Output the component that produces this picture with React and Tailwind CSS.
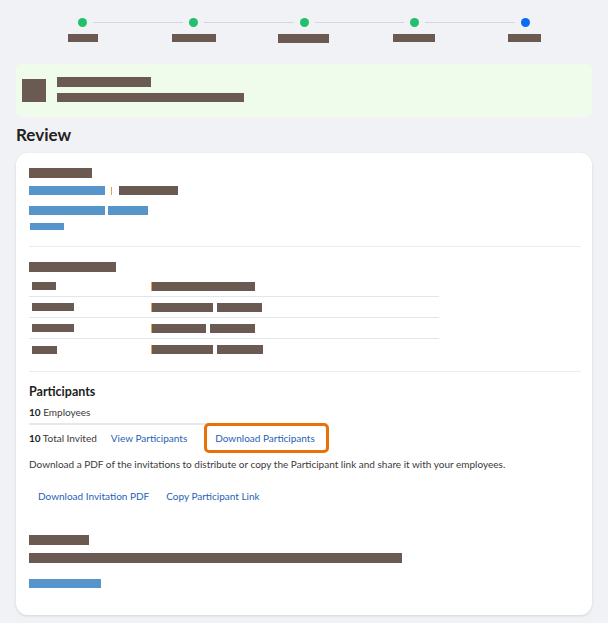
import React from 'react';

const brown = 'bg-[#6b5a52]';
const blue = 'bg-[#5595c9]';

const Block = ({ className = '' }) => <span className={`block ${className}`} />;

const steps = [
  { w: 'w-[30px]', h: 'h-[8px]', done: true },
  { w: 'w-[44px]', h: 'h-[8px]', done: true },
  { w: 'w-[51px]', h: 'h-[9px]', done: true },
  { w: 'w-[42px]', h: 'h-[8px]', done: true },
  { w: 'w-[33px]', h: 'h-[8px]', done: false },
];

const rows = [
  { a: 'w-[24px]', b: ['w-[104px]'] },
  { a: 'w-[42px]', b: ['w-[62px]', 'w-[45px]'] },
  { a: 'w-[42px]', b: ['w-[55px]', 'w-[45px]'] },
  { a: 'w-[25px]', b: ['w-[62px]', 'w-[46px]'] },
];

const Stepper = () => (
  <div className="pt-[18px]">
    <div className="flex items-center px-[78px]">
      {steps.map((s, i) => (
        <React.Fragment key={i}>
          <span
            className={`block w-[9px] h-[9px] rounded-full shrink-0 ${s.done ? 'bg-[#22c06b]' : 'bg-[#0a6cf5]'}`}
          />
          {i < steps.length - 1 && <span className="block flex-1 h-px bg-[#d4d6db] mx-[6px]" />}
        </React.Fragment>
      ))}
    </div>
    <div className="grid grid-cols-5 mx-[28px] mt-[7px] h-[9px]">
      {steps.map((s, i) => (
        <div key={i} className="flex justify-center">
          <Block className={`${brown} ${s.w} ${s.h}`} />
        </div>
      ))}
    </div>
  </div>
);

export default function App() {
  return (
    <div
      className="w-[608px] min-h-[623px] bg-[#f1f2f6] text-[#3a3a3a] pb-[9px]"
      style={{ fontFamily: 'Lato, "Open Sans", Arial, sans-serif' }}
    >
      <Stepper />

      {/* banner */}
      <div className="mx-[16px] mt-[21px] h-[53px] rounded-[6px] bg-[#effcec] flex items-center pl-[6px]">
        <Block className={`${brown} w-[24px] h-[23px]`} />
        <div className="ml-[11px] flex flex-col gap-[6px] -mt-[2px]">
          <Block className={`${brown} w-[94px] h-[10px]`} />
          <Block className={`${brown} w-[187px] h-[9px]`} />
        </div>
      </div>

      <h1 className="mx-[16px] mt-[6px] text-[17px] leading-[24px] font-bold text-[#222]">Review</h1>

      {/* card */}
      <div className="mx-[16px] mt-[6px] bg-white rounded-[12px] shadow-[0_1px_3px_rgba(0,0,0,0.12)] pl-[13px] pr-[11px] pt-[15px] pb-[27px]">
        <Block className={`${brown} w-[63px] h-[10px]`} />
        <div className="flex items-center mt-[8px]">
          <Block className={`${blue} w-[76px] h-[9px]`} />
          <span className="block w-px h-[8px] bg-[#e3a34a] ml-[6px]" />
          <Block className={`${brown} w-[59px] h-[9px] ml-[7px]`} />
        </div>
        <div className="flex items-center gap-[3px] mt-[11px]">
          <Block className={`${blue} w-[76px] h-[9px]`} />
          <Block className={`${blue} w-[40px] h-[9px]`} />
        </div>
        <Block className={`${blue} w-[34px] h-[7px] mt-[8px] ml-px`} />

        <div className="h-px bg-[#ececef] mt-[16px]" />

        <Block className={`${brown} w-[87px] h-[10px] mt-[15px]`} />
        <div className="w-[410px] mt-[4px]">
          {rows.map((r, i) => (
            <div
              key={i}
              className={`flex items-center h-[21px] ${i < rows.length - 1 ? 'border-b border-[#e1e6ec]' : ''}`}
            >
              <div className="w-[122px] pl-[3px]">
                <Block className={`${brown} ${r.a} h-[8px]`} />
              </div>
              <div className="flex gap-[4px]">
                {r.b.map((w, j) => (
                  <Block
                    key={j}
                    className={`${brown} ${w} h-[9px] ${j === 0 ? 'border-l border-[#e8a04a]' : ''}`}
                  />
                ))}
              </div>
            </div>
          ))}
        </div>

        <div className="h-px bg-[#ececef] mt-[11px]" />

        <h2 className="text-[12.5px] font-bold leading-[16px] mt-[12px] text-[#222]">Participants</h2>
        <p className="text-[10px] leading-[14px] mt-[5px]">
          <span className="font-bold text-[#222]">10</span> Employees
        </p>
        <div className="mt-[4px]">
          <div className="h-[2px] bg-[#e6e8ec] w-[180px]" />
          <div className="flex items-center h-[30px] text-[10px] -mt-[2px]">
            <span>
              <span className="font-bold text-[#222]">10</span> Total Invited
            </span>
            <a className="text-[#1f5fb5] ml-[14px] cursor-pointer">View Participants</a>
            <a className="text-[#1f5fb5] ml-[17px] h-[30px] pl-[8px] pr-[11px] flex items-center border-[3px] border-[#e8710a] rounded-[5px] bg-white cursor-pointer">
              Download Participants
            </a>
          </div>
        </div>
        <p className="text-[10px] leading-[14px] mt-[4px]">
          Download a PDF of the invitations to distribute or copy the Participant link and share it with your employees.
        </p>
        <div className="flex gap-[17px] text-[10px] text-[#1f5fb5] mt-[18px] ml-[9px]">
          <a className="cursor-pointer">Download Invitation PDF</a>
          <a className="cursor-pointer">Copy Participant Link</a>
        </div>

        <Block className={`${brown} w-[60px] h-[10px] mt-[31px]`} />
        <Block className={`${brown} w-[373px] h-[10px] mt-[8px]`} />
        <Block className={`${blue} w-[72px] h-[9px] mt-[16px]`} />
      </div>
    </div>
  );
}
